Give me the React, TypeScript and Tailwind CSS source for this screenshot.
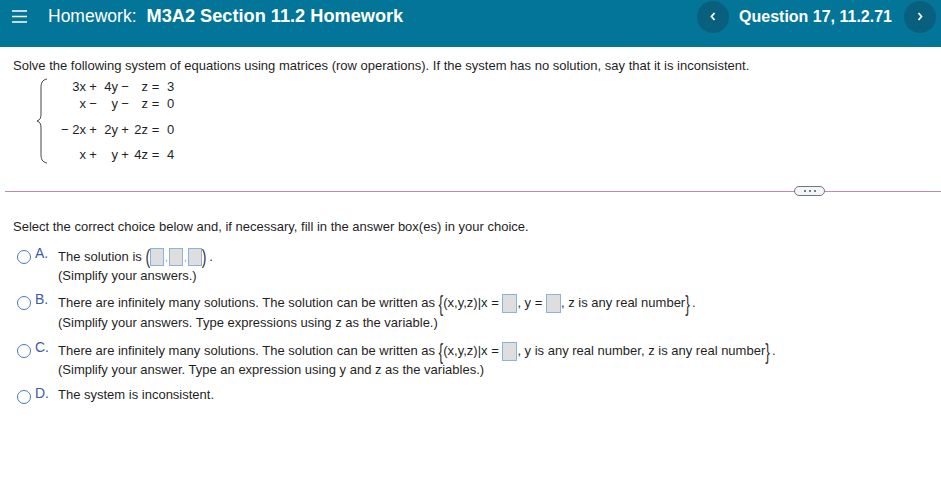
import React from 'react';

const Box = ({ w = 15, h = 19 }: { w?: number; h?: number }) => (
  <span
    className="inline-block border border-[#8fb0e3] bg-[#dedede] align-middle"
    style={{ width: w, height: h }}
  />
);

const Radio = () => (
  <span className="mt-[3px] inline-block h-[14px] w-[14px] shrink-0 rounded-full border-[1.5px] border-[#4a78c2] bg-white" />
);

const Option = ({
  letter,
  children,
  className = '',
}: {
  letter: string;
  children: React.ReactNode;
  className?: string;
}) => (
  <div className={`flex items-start pl-[17px] ${className}`}>
    <Radio />
    <span className="ml-[4px] mt-[-2px] w-[19px] text-[14px] leading-[16px] text-[#3d5aa6]">{letter}</span>
    <div className="ml-[4px] flex flex-col">{children}</div>
  </div>
);

const Eq = ({
  a,
  op1,
  b,
  op2,
  c,
  rhs,
  className = '',
}: {
  a: string;
  op1: string;
  b: string;
  op2: string;
  c: string;
  rhs: string;
  className?: string;
}) => (
  <div className={`flex h-[16px] items-center leading-[16px] ${className}`}>
    <span className="w-[36px] text-right">{a}</span>
    <span className="w-[14px] text-center">{op1}</span>
    <span className="w-[18px] text-right">{b}</span>
    <span className="w-[14px] text-center">{op2}</span>
    <span className="w-[16px] text-right">{c}</span>
    <span className="w-[15px] text-center">=</span>
    <span className="ml-[4px]">{rhs}</span>
  </div>
);

const Stretch = ({ ch, scale = 'scale-y-[1.6]' }: { ch: string; scale?: string }) => (
  <span className={`inline-block ${scale} text-[14px] leading-[16px] text-[#333]`}>{ch}</span>
);

export default function App() {
  return (
    <div className="h-[493px] w-[941px] overflow-hidden bg-white font-['Liberation_Sans',Arial,sans-serif] text-[13px] text-[#1f1f1f]">
      {/* header */}
      <div className="h-[47px] bg-[#037598]">
        <div className="flex h-[33px] items-center">
          <svg width="16" height="13" viewBox="0 0 16 13" className="ml-[12px]">
            <path d="M0 1h15M0 6.5h15M0 12h15" stroke="white" strokeWidth="1.6" />
          </svg>
          <div className="ml-[20px] flex items-baseline text-white">
            <span className="text-[17.5px]">Homework:</span>
            <span className="ml-[10px] text-[18.2px] font-bold">M3A2 Section 11.2 Homework</span>
          </div>
          <div className="ml-auto mr-[5px] flex items-center">
            <button className="flex h-[32px] w-[32px] items-center justify-center rounded-full bg-[#08607e]">
              <svg width="6" height="9" viewBox="0 0 6 9">
                <path d="M4.5 1L1.5 4.5l3 3.5" stroke="white" strokeWidth="1.8" fill="none" />
              </svg>
            </button>
            <span className="ml-[10px] mr-[12px] text-[16px] font-bold text-white">Question 17, 11.2.71</span>
            <button className="flex h-[32px] w-[32px] items-center justify-center rounded-full bg-[#08607e]">
              <svg width="6" height="9" viewBox="0 0 6 9">
                <path d="M1.5 1l3 3.5-3 3.5" stroke="white" strokeWidth="1.8" fill="none" />
              </svg>
            </button>
          </div>
        </div>
      </div>

      {/* question */}
      <div className="pl-[13px] pt-[11px] leading-[16px]">
        Solve the following system of equations using matrices (row operations). If the system has no solution, say that it is inconsistent.
      </div>
      <div className="mt-[4px] flex pl-[36px]">
        <svg width="14" height="86" viewBox="0 0 14 86" className="text-[#444]">
          <path
            d="M11 1 C6 2 5 5 5 10 L5 36 C5 40 4 42 1 43 C4 44 5 46 5 50 L5 76 C5 81 6 84 11 85"
            stroke="currentColor"
            strokeWidth="1"
            fill="none"
          />
        </svg>
        <div className="pt-[1px]">
          <Eq a="3x" op1="+" b="4y" op2="−" c="z" rhs="3" />
          <Eq a="x" op1="−" b="y" op2="−" c="z" rhs="0" className="mt-[1px]" />
          <Eq a="− 2x" op1="+" b="2y" op2="+" c="2z" rhs="0" className="mt-[10px]" />
          <Eq a="x" op1="+" b="y" op2="+" c="4z" rhs="4" className="mt-[9px]" />
        </div>
      </div>

      {/* divider */}
      <div className="relative ml-[5px] mt-[27px] h-px bg-[#b98fac]">
        <div className="absolute left-[789px] top-[-5px] flex h-[10px] w-[31px] items-center justify-center gap-[3px] rounded-full border border-[#6b7784] bg-[#f4f5f7]">
          <span className="h-[2px] w-[2px] rounded-full bg-[#4b5563]" />
          <span className="h-[2px] w-[2px] rounded-full bg-[#4b5563]" />
          <span className="h-[2px] w-[2px] rounded-full bg-[#4b5563]" />
        </div>
      </div>

      <div className="mt-[27px] pl-[13px] leading-[16px]">
        Select the correct choice below and, if necessary, fill in the answer box(es) in your choice.
      </div>

      <Option letter="A." className="mt-[12px]">
        <div className="flex h-[20px] items-center">
          <span>The solution is&nbsp;</span>
          <Stretch ch="(" scale="scale-y-[1.45]" />
          <Box w={14} h={18} />
          <span className="mx-[1px] text-[10px] text-[#999]">,</span>
          <Box w={14} h={18} />
          <span className="mx-[1px] text-[10px] text-[#999]">,</span>
          <Box w={14} h={18} />
          <Stretch ch=")" scale="scale-y-[1.45]" />
          <span className="ml-[3px]">.</span>
        </div>
        <div className="mt-[1px] leading-[16px]">(Simplify your answers.)</div>
      </Option>

      <Option letter="B." className="mt-[9px]">
        <div className="flex h-[20px] items-center">
          <span>There are infinitely many solutions. The solution can be written as&nbsp;</span>
          <Stretch ch="{" />
          <span>(x,y,z)|x =&nbsp;</span>
          <Box />
          <span>, y =&nbsp;</span>
          <Box />
          <span>, z is any real number</span>
          <Stretch ch="}" />
          <span className="ml-[2px]">.</span>
        </div>
        <div className="mt-[2px] leading-[16px]">(Simplify your answers. Type expressions using z as the variable.)</div>
      </Option>

      <Option letter="C." className="mt-[10px]">
        <div className="flex h-[20px] items-center">
          <span>There are infinitely many solutions. The solution can be written as&nbsp;</span>
          <Stretch ch="{" />
          <span>(x,y,z)|x =&nbsp;</span>
          <Box />
          <span>, y is any real number, z is any real number</span>
          <Stretch ch="}" />
          <span className="ml-[2px]">.</span>
        </div>
        <div className="mt-[1px] leading-[16px]">(Simplify your answer. Type an expression using y and z as the variables.)</div>
      </Option>

      <Option letter="D." className="mt-[9px]">
        <div className="leading-[16px]">The system is inconsistent.</div>
      </Option>
    </div>
  );
}
